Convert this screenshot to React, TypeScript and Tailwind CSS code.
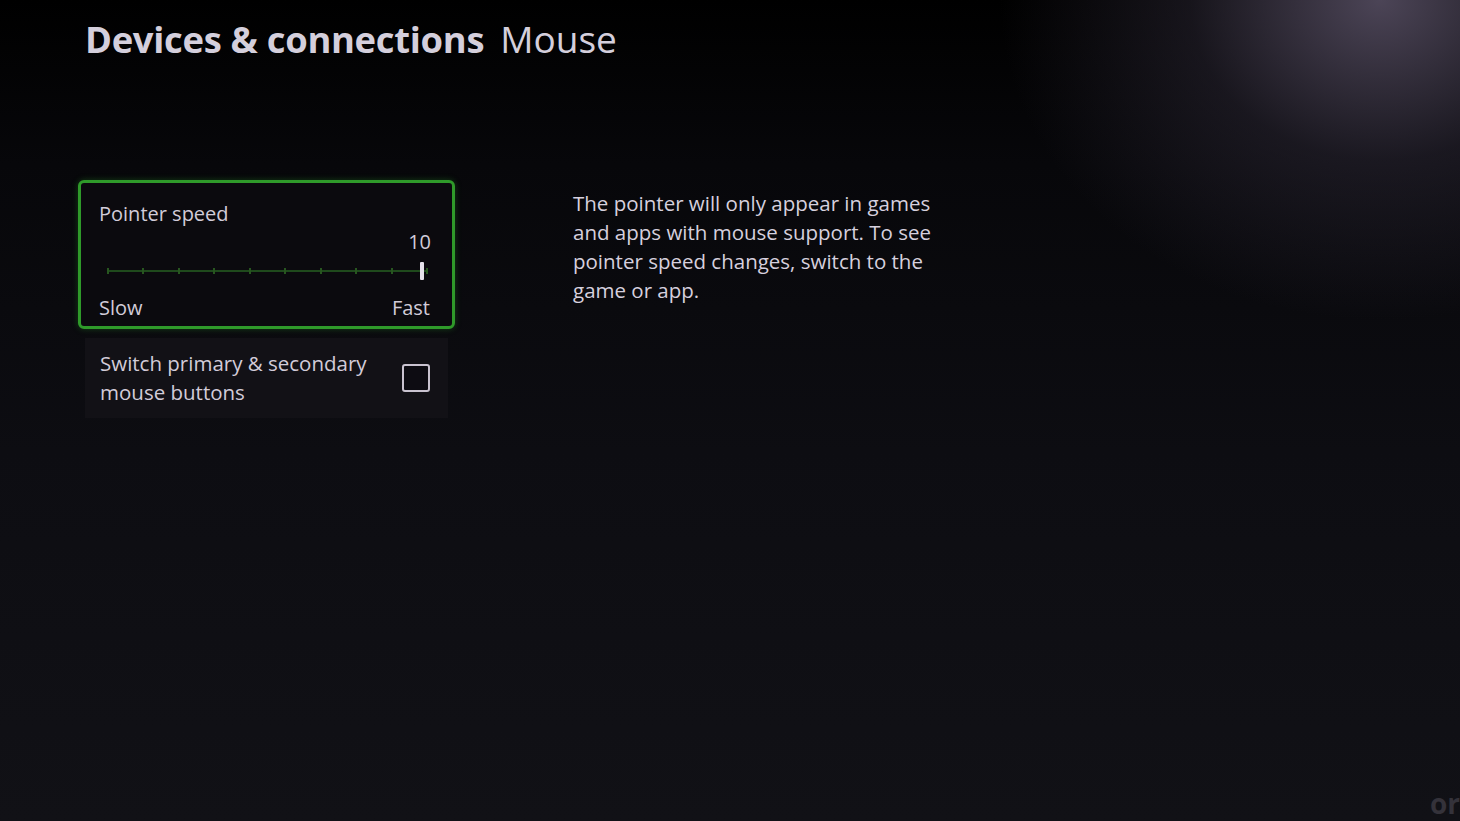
import React from "react";

const ticks = [0, 1, 2, 3, 4, 5, 6, 7, 8, 9];

function PointerSpeedCard() {
  return (
    <div className="w-[377px] h-[149px] rounded-[6px] border-[3px] border-[#2f9a2a] bg-[#0b0a0e] px-[18px] pt-[19px] flex flex-col shadow-[0_0_6px_rgba(40,160,40,0.35)]">
      <div className="text-[20px] leading-[24px] text-[#d2ccd9]">Pointer speed</div>
      <div className="flex justify-end pr-[3px] mt-[4px] text-[20px] leading-[24px] text-[#d2ccd9]">10</div>
      <div className="relative mx-[8px] mt-[9px] h-[16px] flex items-center">
        <div className="h-[2px] w-full bg-[#1f4a1c]" />
        {ticks.map((t) => (
          <div
            key={t}
            className="absolute top-[5px] h-[6px] w-[2px] bg-[#27561f]"
            style={{ left: `${(t / 9) * 100}%` }}
          />
        ))}
        <div className="absolute right-[2px] top-[-1px] h-[18px] w-[4px] rounded-[1px] bg-[#e6e1ea]" />
      </div>
      <div className="flex justify-between mt-[17px] pr-[4px] text-[20px] leading-[24px] text-[#d2ccd9]">
        <span>Slow</span>
        <span>Fast</span>
      </div>
    </div>
  );
}

function SwapButtonsRow() {
  return (
    <div className="ml-[7px] mt-[9px] w-[363px] h-[80px] bg-[#121116] flex items-center justify-between pl-[15px] pr-[18px]">
      <div className="text-[20.5px] leading-[29px] text-[#d2ccd9]">
        Switch primary &amp; secondary
        <br />
        mouse buttons
      </div>
      <div className="w-[28px] h-[28px] rounded-[3px] border-2 border-[#c9c3d0] bg-[#0d0c12]" />
    </div>
  );
}

export default function App() {
  return (
    <div
      className="relative w-[1460px] h-[821px] overflow-hidden bg-[linear-gradient(180deg,#000000_0%,#07070a_20%,#0d0d12_55%,#111116_100%)]"
      style={{ fontFamily: '"Open Sans", "Noto Sans", sans-serif' }}
    >
      {/* soft light bleeding in from the top-right corner */}
      <div className="pointer-events-none absolute -right-[300px] -top-[320px] w-[760px] h-[640px] rounded-full bg-[radial-gradient(closest-side,rgba(84,76,96,0.9),rgba(50,45,60,0.45)_50%,rgba(0,0,0,0)_100%)]" />

      <div className="relative pl-[85px] pt-[15px] flex items-baseline gap-[16px] text-[#d4cfdc]">
        <span className="text-[36.4px] leading-[48px] font-bold tracking-[-0.3px]">Devices &amp; connections</span>
        <span className="text-[37px] leading-[48px] font-normal">Mouse</span>
      </div>

      <div className="relative flex mt-[117px] pl-[78px]">
        <div className="flex flex-col">
          <PointerSpeedCard />
          <SwapButtonsRow />
        </div>
        <div className="ml-[118px] mt-[9px] w-[372px] text-[20.5px] leading-[29px] text-[#d6d0de]">
          The pointer will only appear in games and apps with mouse support. To see pointer speed changes, switch to the game or app.
        </div>
      </div>

      <div className="absolute right-0 bottom-[4px] text-[28px] font-bold leading-none text-[#34323a]">or</div>
    </div>
  );
}
